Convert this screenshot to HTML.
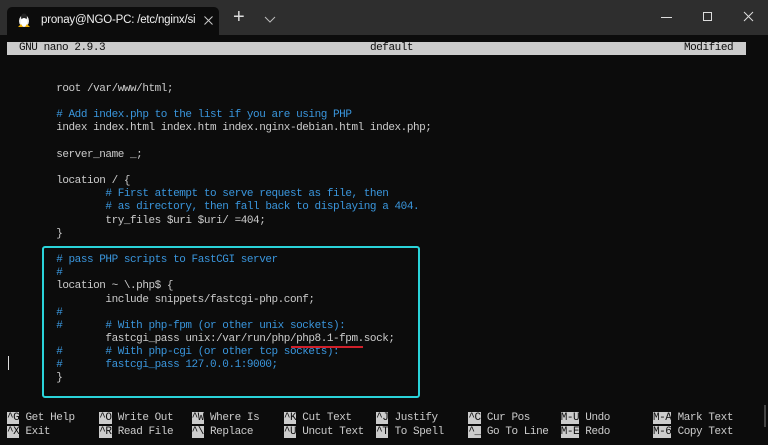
<!DOCTYPE html>
<html><head><style>
*{margin:0;padding:0;box-sizing:border-box}
body{width:768px;height:445px;background:#0c0c0c;overflow:hidden;position:relative;font-family:"Liberation Mono",monospace}
#tb{position:absolute;left:0;top:0;width:768px;height:35px;background:#2e2e2e}
#tab{position:absolute;left:7px;top:7px;width:212px;height:28px;background:#0c0c0c;border-radius:5px 5px 0 0;font-family:"Liberation Sans",sans-serif;font-size:11.5px;color:#f0f0f0}
.t{position:absolute;white-space:pre;font-size:11px;letter-spacing:-0.45px;line-height:13.15px;color:#cccccc;left:7px}
.c{color:#3a96dd}
.k{background:#cccccc;color:#0c0c0c}
#sb{position:absolute;left:7px;top:42px;width:739px;height:13px;background:#cccccc;color:#0c0c0c;font-size:11px;letter-spacing:-0.45px;line-height:13px;white-space:pre}
#sb span{position:absolute;top:0}
</style></head><body>
<div id="tb">
<div id="tab">
<svg style="position:absolute;left:10px;top:6px" width="14" height="15" viewBox="0 0 14 15"><ellipse cx="7" cy="8" rx="5" ry="6" fill="#eee"/><ellipse cx="7" cy="4" rx="3" ry="3.5" fill="#222"/><ellipse cx="7" cy="9" rx="3.2" ry="4" fill="#fff"/><path d="M1 14 L4 11 L6 14Z M13 14 L10 11 L8 14Z" fill="#f0b000"/></svg>
<span style="position:absolute;left:34px;top:7px;letter-spacing:-0.2px">pronay@NGO-PC: /etc/nginx/si</span>
<svg style="position:absolute;left:197px;top:9px" width="9" height="9"><path d="M0.5 0.5L8.5 8.5M8.5 0.5L0.5 8.5" stroke="#ccc"/></svg>
</div>
<span style="position:absolute;left:233px;top:6px;color:#ddd;font:20px 'Liberation Sans',sans-serif">+</span>
<svg style="position:absolute;left:264px;top:16px" width="12" height="7"><path d="M1 1L6 6L11 1" stroke="#bbb" fill="none"/></svg>
<div style="position:absolute;left:661px;top:17px;width:11px;height:1px;background:#ddd"></div>
<div style="position:absolute;left:703px;top:12px;width:9px;height:9px;border:1px solid #ddd"></div>
<svg style="position:absolute;left:743px;top:11px" width="11" height="11"><path d="M1 1L10 10M10 1L1 10" stroke="#ddd"/></svg>
</div>
<div id="sb"><span style="left:12px">GNU nano 2.9.3</span><span style="left:363px">default</span><span style="left:677px">Modified</span></div>
<div class="t" style="top:83px">        root /var/www/html;

        <span class="c"># Add index.php to the list if you are using PHP</span>
        index index.html index.htm index.nginx-debian.html index.php;

        server_name _;

        location / {
                <span class="c"># First attempt to serve request as file, then</span>
                <span class="c"># as directory, then fall back to displaying a 404.</span>
                try_files $uri $uri/ =404;
        }

        <span class="c"># pass PHP scripts to FastCGI server</span>
        <span class="c">#</span>
        location ~ \.php$ {
                include snippets/fastcgi-php.conf;
        <span class="c">#</span>
        <span class="c">#       # With php-fpm (or other unix sockets):</span>
                fastcgi_pass unix:/var/run/php/php8.1-fpm.sock;
        <span class="c">#       # With php-cgi (or other tcp sockets):</span>
        <span class="c">#       fastcgi_pass 127.0.0.1:9000;</span>
        }</div>
<div style="position:absolute;left:42px;top:246px;width:378px;height:152px;border:2px solid #2ad4da;border-radius:3px"></div>
<div style="position:absolute;left:291px;top:346px;width:72px;height:2px;background:#d0202a"></div>
<div style="position:absolute;left:8px;top:356px;width:1px;height:14px;background:#ddd"></div>
<div class="t" style="top:412px"><span class="k">^G</span> Get Help    <span class="k">^O</span> Write Out   <span class="k">^W</span> Where Is    <span class="k">^K</span> Cut Text    <span class="k">^J</span> Justify     <span class="k">^C</span> Cur Pos     <span class="k">M-U</span> Undo       <span class="k">M-A</span> Mark Text</div>
<div class="t" style="top:425.5px"><span class="k">^X</span> Exit        <span class="k">^R</span> Read File   <span class="k">^\</span> Replace     <span class="k">^U</span> Uncut Text  <span class="k">^T</span> To Spell    <span class="k">^_</span> Go To Line  <span class="k">M-E</span> Redo       <span class="k">M-6</span> Copy Text</div>
<div style="position:absolute;left:764px;top:405px;width:2px;height:22px;background:#444"></div>
</body></html>
